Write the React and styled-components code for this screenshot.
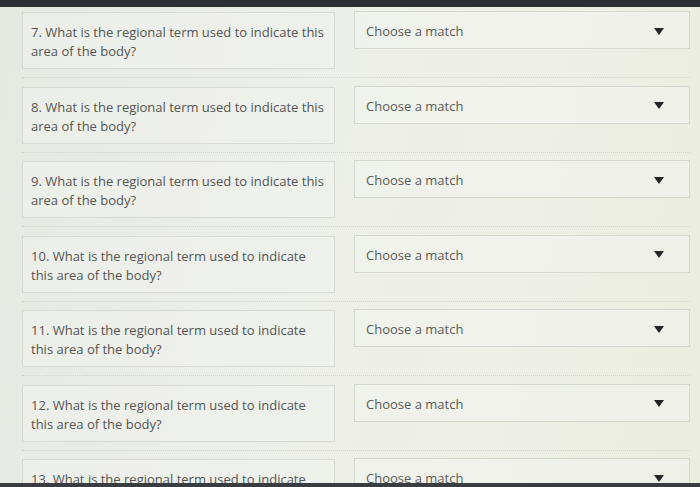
import styled, { createGlobalStyle } from 'styled-components'

const GlobalStyle = createGlobalStyle`
  html, body {
    margin: 0;
    padding: 0;
    background: #e9ebe6;
  }
  * {
    box-sizing: border-box;
  }
`

// STYLES
const Screen = styled.div`
  height: 487px;
  display: flex;
  flex-direction: column;
  overflow: hidden;
  font-family: 'Open Sans', 'Noto Sans', sans-serif;
  background: linear-gradient(100deg, #e6e8e2 0%, #eceee9 40%, #eef0e6 70%, #e9ecde 100%);
`

const TopBar = styled.div`
  height: 7px;
  flex-shrink: 0;
  background: #2b3034;
`

const BottomBar = styled.div`
  height: 4px;
  flex-shrink: 0;
  background: #3a3d3f;
`

const List = styled.div`
  flex: 1;
  overflow: hidden;
  padding: 5px 10px 0 22px;
  display: flex;
  flex-direction: column;
`

const Row = styled.div`
  flex-shrink: 0;
  height: 74.5px;
  display: grid;
  grid-template-columns: 313px 1fr;
  column-gap: 19px;
  align-items: start;
  position: relative;
  &::after {
    content: '';
    position: absolute;
    left: 0;
    right: 0;
    top: 65px;
    border-top: 1px dotted #d3d6cd;
  }
`

const Question = styled.div`
  height: 57px;
  border: 1px solid #d7d9d2;
  background: rgba(240, 242, 237, 0.6);
  padding: 10px 8px 0 8px;
  font-size: 13px;
  line-height: 19px;
  color: #535653;
`

const Select = styled.div`
  height: 38px;
  margin-top: -1px;
  border: 1px solid #d5d8cf;
  background: rgba(242, 244, 238, 0.6);
  display: flex;
  align-items: center;
  justify-content: space-between;
  padding: 2px 25px 0 11px;
  font-size: 13px;
  color: #5a5c5a;
`

const Arrow = styled.span`
  width: 0;
  height: 0;
  border-left: 5px solid transparent;
  border-right: 5px solid transparent;
  border-top: 7px solid #232527;
`

const questions = [7, 8, 9, 10, 11, 12, 13]

const App = () => {
  return (
    <Screen>
      <GlobalStyle />
      <TopBar />
      <List>
        {questions.map(n => (
          <Row key={n}>
            <Question>
              {n}. What is the regional term used to indicate{n < 10 ? ' this' : ''}
              <br />
              {n < 10 ? 'area of the body?' : 'this area of the body?'}
            </Question>
            <Select>
              Choose a match
              <Arrow />
            </Select>
          </Row>
        ))}
      </List>
      <BottomBar />
    </Screen>
  )
}

export default App
